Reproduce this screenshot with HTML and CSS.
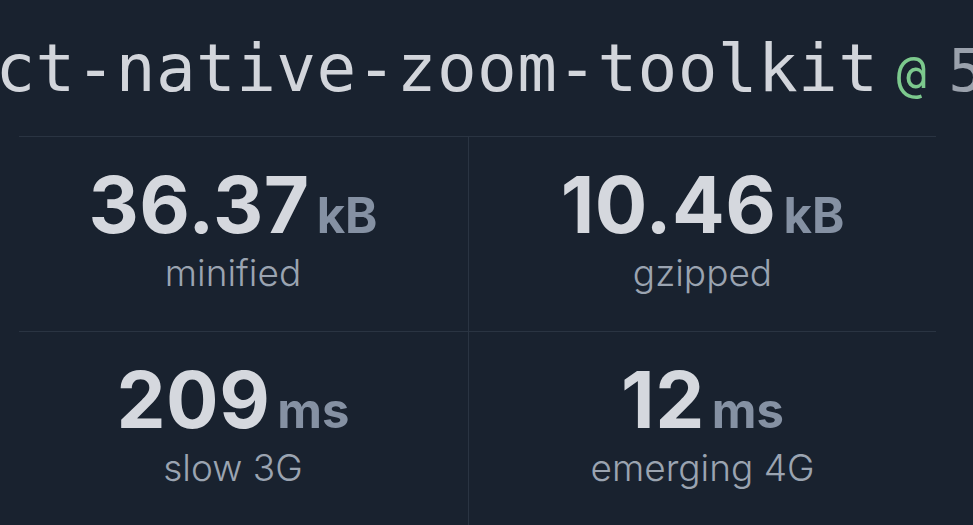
FILE: index.html
```html
<!DOCTYPE html>
<html lang="en">
<head>
    <meta charset="UTF-8">
    <meta name="viewport" content="width=device-width, initial-scale=1.0">
    <title>react-native-zoom-toolkit - bundle size</title>
    <link rel="stylesheet" href="styles.css">
</head>
<body>

<header class="package-title">
    <span class="package-name">react-native-zoom-toolkit</span><span class="package-at">@</span><span class="package-version">5.0.1</span>
</header>

<section class="stats">
    <div class="rule"></div>

    <div class="stat stat-left">
        <div class="stat-value">36.37<span class="stat-unit">kB</span></div>
        <div class="stat-label">minified</div>
    </div>
    <div class="stat">
        <div class="stat-value">10.46<span class="stat-unit">kB</span></div>
        <div class="stat-label">gzipped</div>
    </div>

    <div class="rule"></div>

    <div class="stat stat-left">
        <div class="stat-value">209<span class="stat-unit">ms</span></div>
        <div class="stat-label">slow 3G</div>
    </div>
    <div class="stat">
        <div class="stat-value">12<span class="stat-unit">ms</span></div>
        <div class="stat-label">emerging 4G</div>
    </div>
</section>

</body>
</html>
```

FILE: styles.css
```css
body {
    margin: 0;
    background-color: #19222f;
    color: #d4d7dd;
    font-family: Inter, "Noto Sans", sans-serif;
    overflow: hidden;
}
.package-title {
    height: 136px;
    box-sizing: border-box;
    padding-top: 36px;
    margin-left: -125px;
    white-space: nowrap;
    font-family: "DejaVu Sans Mono", "Liberation Mono", monospace;
    font-size: 66px;
    line-height: 1;
    letter-spacing: 0.4px;
    color: #d2d5db;
}
.package-at {
    font-size: 50px;
    margin-left: 18px;
    letter-spacing: 0;
    color: #7cc98d;
}
.package-version {
    font-size: 58px;
    margin-left: 22px;
    letter-spacing: 0;
    color: #9aa1ac;
}
.stats {
    display: grid;
    grid-template-columns: 471px 467px;
    margin-left: -2px;
}
.rule {
    grid-column: 1 / -1;
    height: 1px;
    margin-left: 21px;
    background-color: #2a3442;
}
.stat {
    height: 194px;
    box-sizing: border-box;
    padding-top: 29px;
    display: flex;
    flex-direction: column;
    align-items: center;
}
.stat-left {
    border-right: 1px solid #2a3442;
}
.stat-value {
    font-size: 78px;
    font-weight: 700;
    line-height: 1;
    letter-spacing: 0.5px;
    color: #d5d8de;
}
.stat-unit {
    font-size: 49px;
    margin-left: 7px;
    letter-spacing: 0;
    color: #8591a3;
}
.stat-label {
    margin-top: 10px;
    font-size: 37px;
    font-weight: 300;
    line-height: 1;
    color: #9ba4b1;
}
```
